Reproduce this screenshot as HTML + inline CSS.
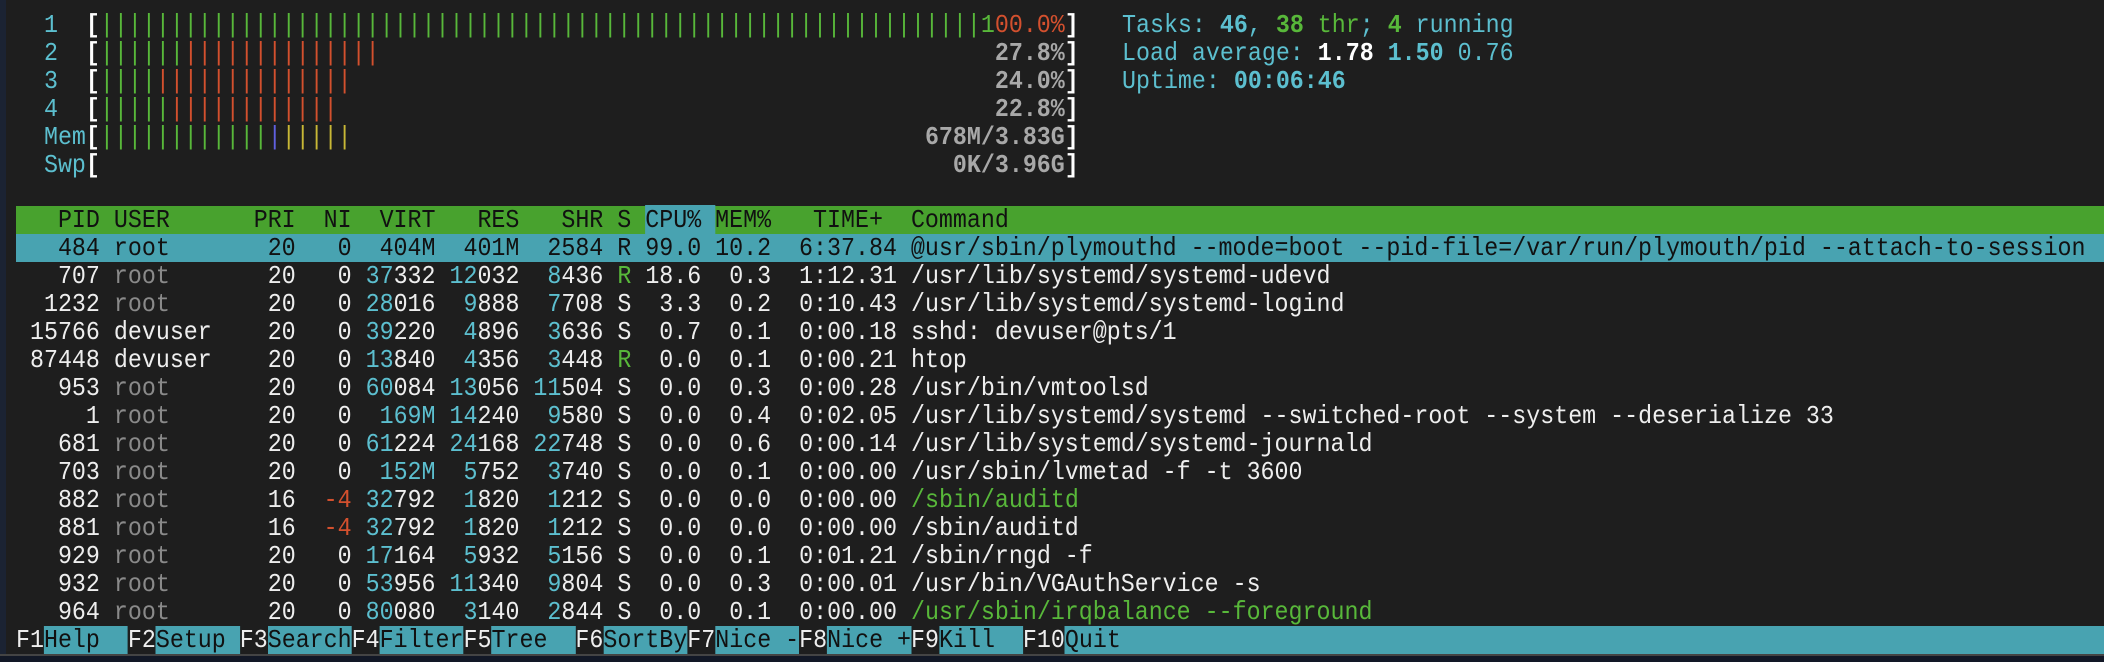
<!DOCTYPE html>
<html><head><meta charset="utf-8"><style>
html,body{margin:0;padding:0}
body{width:2104px;height:660px;background:#1e1e1e;position:relative;overflow:hidden;font-family:"Liberation Mono",monospace;font-size:25.9px;color:#eeeeee}
.l{position:absolute;left:16px;white-space:pre;height:28px;line-height:28px;transform:scaleX(0.9);transform-origin:0 0}
.c{color:#5cbfcf}.g{color:#8a8a8a}.gr{color:#58b83a}.r{color:#d3502e}.y{color:#c8b836}.b{color:#6060e0}.w{color:#ffffff;font-weight:bold}.p{color:#a8a8a8;font-weight:bold}
.bd{font-weight:bold}
#lb{position:absolute;left:0;top:0;width:6px;height:660px;background:#1b2333}
#hdr{position:absolute;left:16px;right:0;top:206px;height:28px;background:#48a22e}
#sel{position:absolute;left:16px;right:0;top:234px;height:28px;background:#48a3b1}
#ft{position:absolute;left:16px;right:0;top:626px;height:28px;background:#48a3b1}
#bot{position:absolute;left:0;right:0;top:654px;height:6px;background:#121826;border-top:2px solid #444}
.k{background:#1e1e1e;color:#eee}
.dk{color:#111}
.cy{background:#48a3b1}
</style></head><body>
<div id="lb"></div>
<div class="l" style="top:11px"><span class="c">  1  </span><span class="w">[</span><span class="gr">|||||||||||||||||||||||||||||||||||||||||||||||||||||||||||||||1</span><span class="r">00.0%</span><span class="w">]</span></div>
<div class="l" style="top:39px"><span class="c">  2  </span><span class="w">[</span><span class="gr">||||||</span><span class="r">||||||||||||||</span>                                            <span class="p">27.8%</span><span class="w">]</span></div>
<div class="l" style="top:67px"><span class="c">  3  </span><span class="w">[</span><span class="gr">||||</span><span class="r">||||||||||||||</span>                                              <span class="p">24.0%</span><span class="w">]</span></div>
<div class="l" style="top:95px"><span class="c">  4  </span><span class="w">[</span><span class="gr">|||||</span><span class="r">||||||||||||</span>                                               <span class="p">22.8%</span><span class="w">]</span></div>
<div class="l" style="top:123px"><span class="c">  Mem</span><span class="w">[</span><span class="gr">||||||||||||</span><span class="b">|</span><span class="y">|||||</span>                                         <span class="p">678M/3.83G</span><span class="w">]</span></div>
<div class="l" style="top:151px"><span class="c">  Swp</span><span class="w">[</span>                                                             <span class="p">0K/3.96G</span><span class="w">]</span></div>

<div class="l" style="top:11px;left:1122px"><span class="c">Tasks: </span><span class="c bd">46</span><span class="c">, </span><span class="gr bd">38</span><span class="gr"> thr</span><span class="c">; </span><span class="gr bd">4</span><span class="c"> running</span></div>
<div class="l" style="top:39px;left:1122px"><span class="c">Load average: </span><span class="w">1.78 </span><span class="c bd">1.50 </span><span class="c">0.76</span></div>
<div class="l" style="top:67px;left:1122px"><span class="c">Uptime: </span><span class="c bd">00:06:46</span></div>

<div id="hdr"></div><div id="sel"></div>
<div class="l dk" style="top:206px">   PID USER      PRI  NI  VIRT   RES   SHR S <span class="cy">CPU% </span>MEM%   TIME+  Command</div>
<div class="l dk" style="top:234px">   484 root       20   0  404M  401M  2584 R 99.0 10.2  6:37.84 @usr/sbin/plymouthd --mode=boot --pid-file=/var/run/plymouth/pid --attach-to-session</div>
<div class="l" style="top:262px">   707 <span class="g">root     </span>  20   0 <span class="c">37</span>332 <span class="c">12</span>032  <span class="c">8</span>436 <span class="gr">R</span> 18.6  0.3  1:12.31 /usr/lib/systemd/systemd-udevd</div>
<div class="l" style="top:290px">  1232 <span class="g">root     </span>  20   0 <span class="c">28</span>016  <span class="c">9</span>888  <span class="c">7</span>708 S  3.3  0.2  0:10.43 /usr/lib/systemd/systemd-logind</div>
<div class="l" style="top:318px"> 15766 devuser    20   0 <span class="c">39</span>220  <span class="c">4</span>896  <span class="c">3</span>636 S  0.7  0.1  0:00.18 sshd: devuser@pts/1</div>
<div class="l" style="top:346px"> 87448 devuser    20   0 <span class="c">13</span>840  <span class="c">4</span>356  <span class="c">3</span>448 <span class="gr">R</span>  0.0  0.1  0:00.21 htop</div>
<div class="l" style="top:374px">   953 <span class="g">root     </span>  20   0 <span class="c">60</span>084 <span class="c">13</span>056 <span class="c">11</span>504 S  0.0  0.3  0:00.28 /usr/bin/vmtoolsd</div>
<div class="l" style="top:402px">     1 <span class="g">root     </span>  20   0  <span class="c">169M</span> <span class="c">14</span>240  <span class="c">9</span>580 S  0.0  0.4  0:02.05 /usr/lib/systemd/systemd --switched-root --system --deserialize 33</div>
<div class="l" style="top:430px">   681 <span class="g">root     </span>  20   0 <span class="c">61</span>224 <span class="c">24</span>168 <span class="c">22</span>748 S  0.0  0.6  0:00.14 /usr/lib/systemd/systemd-journald</div>
<div class="l" style="top:458px">   703 <span class="g">root     </span>  20   0  <span class="c">152M</span>  <span class="c">5</span>752  <span class="c">3</span>740 S  0.0  0.1  0:00.00 /usr/sbin/lvmetad -f -t 3600</div>
<div class="l" style="top:486px">   882 <span class="g">root     </span>  16  <span class="r">-4</span> <span class="c">32</span>792  <span class="c">1</span>820  <span class="c">1</span>212 S  0.0  0.0  0:00.00 <span class="gr">/sbin/auditd</span></div>
<div class="l" style="top:514px">   881 <span class="g">root     </span>  16  <span class="r">-4</span> <span class="c">32</span>792  <span class="c">1</span>820  <span class="c">1</span>212 S  0.0  0.0  0:00.00 /sbin/auditd</div>
<div class="l" style="top:542px">   929 <span class="g">root     </span>  20   0 <span class="c">17</span>164  <span class="c">5</span>932  <span class="c">5</span>156 S  0.0  0.1  0:01.21 /sbin/rngd -f</div>
<div class="l" style="top:570px">   932 <span class="g">root     </span>  20   0 <span class="c">53</span>956 <span class="c">11</span>340  <span class="c">9</span>804 S  0.0  0.3  0:00.01 /usr/bin/VGAuthService -s</div>
<div class="l" style="top:598px">   964 <span class="g">root     </span>  20   0 <span class="c">80</span>080  <span class="c">3</span>140  <span class="c">2</span>844 S  0.0  0.1  0:00.00 <span class="gr">/usr/sbin/irqbalance --foreground</span></div>

<div id="ft"></div>
<div class="l dk" style="top:626px"><span class="k">F1</span>Help  <span class="k">F2</span>Setup <span class="k">F3</span>Search<span class="k">F4</span>Filter<span class="k">F5</span>Tree  <span class="k">F6</span>SortBy<span class="k">F7</span>Nice -<span class="k">F8</span>Nice +<span class="k">F9</span>Kill  <span class="k">F10</span>Quit</div>
<div id="bot"></div>
</body></html>
